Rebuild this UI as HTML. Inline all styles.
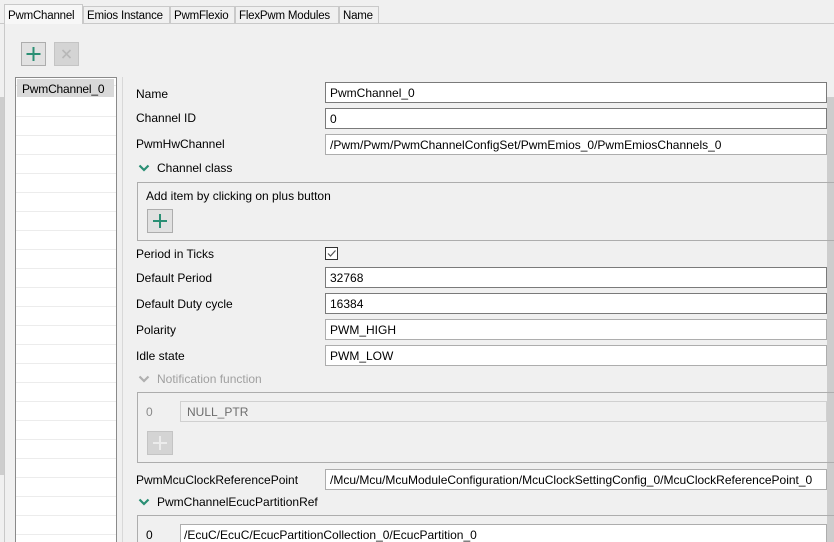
<!DOCTYPE html>
<html><head><style>
html,body{margin:0;width:834px;height:542px;overflow:hidden}
body{background:#f0f0f0;font-family:"Liberation Sans",sans-serif;font-size:12px;color:#000;position:relative}
.a{position:absolute}
.t{position:absolute;white-space:nowrap;line-height:14px}
.f{position:absolute;background:#fff;border:1px solid #7a7a7a;box-sizing:border-box;height:21px;padding:3px 0 0 4px;white-space:nowrap;overflow:hidden;line-height:14px}
.l{border-color:#adadad}
.tab{position:absolute;top:6px;height:17px;border:1px solid #c9c9c9;border-bottom:none;background:#f0f0f0;padding:2px 0 0 3px;box-sizing:border-box;line-height:14px;white-space:nowrap;overflow:hidden;font-size:11.5px;letter-spacing:-0.2px}
.btn{position:absolute;width:25px;height:24px;box-sizing:border-box;border:1px solid #adadad;background:#e1e1e1}
.box{position:absolute;border:1px solid #adadad;box-sizing:border-box}
</style></head><body>
<div class="a" style="left:0;top:23px;width:834px;height:1px;background:#c9c9c9"></div>
<div class="tab" style="left:4px;width:79px;background:#f7f7f7;top:4px;height:20px;padding-top:4px">PwmChannel</div>
<div class="tab" style="left:83px;width:87px">Emios Instance</div>
<div class="tab" style="left:170px;width:65px">PwmFlexio</div>
<div class="tab" style="left:235px;width:104px">FlexPwm Modules</div>
<div class="tab" style="left:339px;width:40px">Name</div>
<div class="a" style="left:4px;top:24px;width:1px;height:518px;background:#c9c9c9"></div>
<div class="a" style="left:0;top:97px;width:4px;height:378px;background:#cdcdcd"></div>
<div class="btn" style="left:21px;top:42px"><svg width="23" height="22"><path d="M11.5 4v14M4.5 11h14" stroke="#2a8f74" stroke-width="2"/></svg></div>
<div class="btn" style="left:54px;top:42px;background:#d4d4d4;border-color:#c4c4c4"><svg width="23" height="22"><path d="M7.5 7l8 8M15.5 7l-8 8" stroke="#b8b8b8" stroke-width="1.6"/></svg></div>
<div class="a" style="left:15px;top:77px;width:102px;height:470px;background:#fff;border:1px solid #8a8a8a;box-sizing:border-box;
background-image:repeating-linear-gradient(to bottom,transparent 0,transparent 18px,#ececec 18px,#ececec 19px);background-position:0 20px"></div>
<div class="a" style="left:17px;top:79px;width:97px;height:18px;background:#d9d9d9"></div>
<div class="t" style="left:22px;top:82px;letter-spacing:-0.2px">PwmChannel_0</div>
<div class="a" style="left:122px;top:77px;width:1px;height:465px;background:#d8d8d8"></div>
<div class="a" style="left:827px;top:97px;width:7px;height:445px;background:#cdcdcd"></div>

<div class="t" style="left:136px;top:87px">Name</div>
<div class="f" style="left:325px;top:82px;width:502px">PwmChannel_0</div>
<div class="t" style="left:136px;top:111px">Channel ID</div>
<div class="f" style="left:325px;top:108px;width:502px">0</div>
<div class="t" style="left:136px;top:137px">PwmHwChannel</div>
<div class="f l" style="left:325px;top:134px;width:502px">/Pwm/Pwm/PwmChannelConfigSet/PwmEmios_0/PwmEmiosChannels_0</div>
<svg class="a" style="left:138px;top:163px" width="12" height="10"><path d="M1.5 2.5l4.5 4.5 4.5-4.5" stroke="#2a8f74" stroke-width="2.2" fill="none"/></svg>
<div class="t" style="left:157px;top:161px">Channel class</div>
<div class="box" style="left:137px;top:182px;width:700px;height:59px"></div>
<div class="t" style="left:146px;top:189px">Add item by clicking on plus button</div>
<div class="btn" style="left:147px;top:209px;width:26px"><svg width="24" height="22"><path d="M12 4v14M5 11h14" stroke="#2a8f74" stroke-width="2"/></svg></div>
<div class="t" style="left:136px;top:247px">Period in Ticks</div>
<div class="a" style="left:325px;top:247px;width:13px;height:13px;border:1px solid #333;box-sizing:border-box;background:#fff"><svg width="11" height="11"><path d="M2 5.5l2.5 2.5 5-5.5" stroke="#555" stroke-width="1.2" fill="none"/></svg></div>
<div class="t" style="left:136px;top:271px">Default Period</div>
<div class="f" style="left:325px;top:267px;width:502px">32768</div>
<div class="t" style="left:136px;top:297px">Default Duty cycle</div>
<div class="f" style="left:325px;top:293px;width:502px">16384</div>
<div class="t" style="left:136px;top:323px">Polarity</div>
<div class="f l" style="left:325px;top:319px;width:502px">PWM_HIGH</div>
<div class="t" style="left:136px;top:349px">Idle state</div>
<div class="f l" style="left:325px;top:345px;width:502px">PWM_LOW</div>
<svg class="a" style="left:138px;top:374px" width="12" height="10"><path d="M1.5 2.5l4.5 4.5 4.5-4.5" stroke="#b0b0b0" stroke-width="2.2" fill="none"/></svg>
<div class="t" style="left:157px;top:372px;color:#a0a0a0">Notification function</div>
<div class="box" style="left:137px;top:392px;width:700px;height:71px"></div>
<div class="t" style="left:146px;top:405px;color:#8a8a8a">0</div>
<div class="f l" style="left:180px;top:401px;width:647px;background:#f0f0f0;border-color:#d0d0d0;color:#6d6d6d;padding-left:6px">NULL_PTR</div>
<div class="btn" style="left:147px;top:431px;width:26px;background:#d4d4d4;border-color:#c4c4c4"><svg width="24" height="22"><path d="M12 4v14M5 11h14" stroke="#ececec" stroke-width="2"/></svg></div>
<div class="t" style="left:136px;top:473px">PwmMcuClockReferencePoint</div>
<div class="f l" style="left:325px;top:469px;width:502px">/Mcu/Mcu/McuModuleConfiguration/McuClockSettingConfig_0/McuClockReferencePoint_0</div>
<svg class="a" style="left:138px;top:497px" width="12" height="10"><path d="M1.5 2.5l4.5 4.5 4.5-4.5" stroke="#2a8f74" stroke-width="2.2" fill="none"/></svg>
<div class="t" style="left:157px;top:495px">PwmChannelEcucPartitionRef</div>
<div class="box" style="left:137px;top:515px;width:700px;height:40px"></div>
<div class="t" style="left:146px;top:528px">0</div>
<div class="f l" style="left:180px;top:524px;width:647px;padding-left:3px">/EcuC/EcuC/EcucPartitionCollection_0/EcucPartition_0</div>
</body></html>
